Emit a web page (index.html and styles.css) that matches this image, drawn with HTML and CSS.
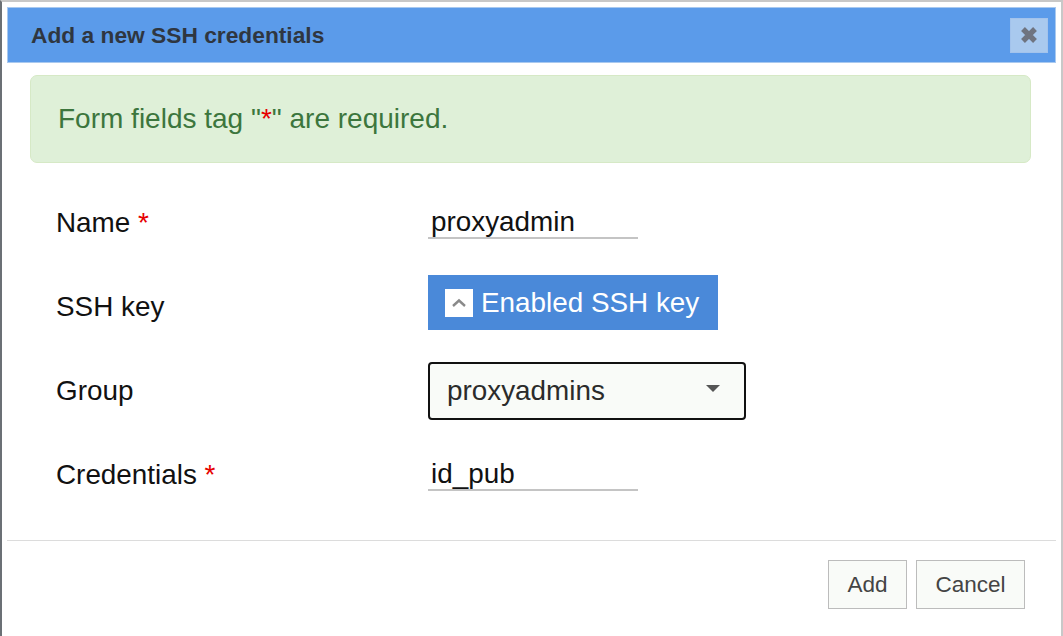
FILE: index.html
```html
<!DOCTYPE html>
<html lang="en">
<head>
<meta charset="utf-8">
<title>Add a new SSH credentials</title>
<link rel="stylesheet" href="styles.css">
</head>
<body>
<div class="dialog">
  <header class="titlebar">
    <h1 class="title">Add a new SSH credentials</h1>
    <button class="close" type="button" aria-label="Close">
      <svg class="close-icon" viewBox="0 0 20 20" width="20" height="20"><path d="M4 4L16 16M16 4L4 16" stroke="#6f7480" stroke-width="5.4" fill="none"/></svg>
    </button>
  </header>
  <div class="body">
    <div class="alert">Form fields tag "<span class="req">*</span>" are required.</div>
    <form class="form">
      <div class="row">
        <label class="label">Name <span class="req-label">*</span></label>
        <div class="field"><span class="line-input">proxyadmin</span></div>
      </div>
      <div class="row">
        <label class="label">SSH key</label>
        <div class="field field-raised">
          <span class="toggle">
            <span class="toggle-box"><svg viewBox="0 0 14 14" width="14" height="14"><path d="M1 10L7 4.5L13 10" stroke="#8a8a8a" stroke-width="2.4" fill="none"/></svg></span>
            Enabled SSH key
          </span>
        </div>
      </div>
      <div class="row">
        <label class="label">Group</label>
        <div class="field">
          <span class="select">proxyadmins<span class="caret"></span></span>
        </div>
      </div>
      <div class="row">
        <label class="label">Credentials <span class="req-label">*</span></label>
        <div class="field"><span class="line-input">id_pub</span></div>
      </div>
    </form>
  </div>
  <footer class="footer">
    <button class="btn" type="button">Add</button>
    <button class="btn" type="button">Cancel</button>
  </footer>
</div>
</body>
</html>
```
FILE: styles.css
```css
html, body {
  margin: 0;
  padding: 0;
  height: 100%;
  background: #fff;
  overflow: hidden;
}
body {
  font-family: "Liberation Sans", Arial, sans-serif;
  color: #111;
  box-sizing: border-box;
  height: 636px;
  border-top: 2px solid #c8c8c8;
  border-left: 2px solid #6b7075;
  border-right: 2px solid #c8c8c8;
}
.dialog {
  padding: 5px 5px 0 5px;
}
.titlebar {
  display: flex;
  align-items: center;
  justify-content: space-between;
  box-sizing: border-box;
  height: 56px;
  padding: 0 7px 0 23px;
  background: #5b9bea;
  border: 1px solid #a9c9ef;
}
.title {
  margin: 0;
  font-size: 22.75px;
  font-weight: 700;
  color: #2f3640;
}
.close {
  display: flex;
  align-items: center;
  justify-content: center;
  width: 38px;
  height: 35px;
  padding: 0;
  border: 1px solid #a3c3ec;
  background: #a9c9ee;
}
.body {
  padding: 12px 25px 0 23px;
}
.alert {
  box-sizing: border-box;
  height: 88px;
  line-height: 85px;
  padding-left: 27px;
  font-size: 28px;
  color: #3c763d;
  background: #dff0d8;
  border: 1px solid #d6e9c6;
  border-radius: 7px;
}
.req {
  color: #e60000;
}
.form {
  display: flex;
  flex-direction: column;
  padding: 18px 0 0 26px;
}
.row {
  display: flex;
  align-items: center;
  height: 84px;
  font-size: 27.85px;
}
.label {
  width: 372px;
  flex: none;
}
.req-label {
  color: #e60000;
}
.field-raised {
  margin-bottom: 9px;
}
.line-input {
  display: block;
  box-sizing: border-box;
  width: 210px;
  height: 32px;
  padding-left: 3px;
  line-height: 30px;
  border-bottom: 2px solid #c4c4c4;
}
.toggle {
  display: inline-flex;
  align-items: center;
  gap: 8px;
  box-sizing: border-box;
  width: 290px;
  height: 55px;
  padding-left: 17px;
  color: #fff;
  background: #4a89d9;
}
.toggle-box {
  display: flex;
  align-items: center;
  justify-content: center;
  width: 28px;
  height: 28px;
  background: #fff;
}
.select {
  display: flex;
  align-items: center;
  justify-content: space-between;
  box-sizing: border-box;
  width: 318px;
  height: 58px;
  padding: 0 24px 0 17px;
  color: #2b2b2b;
  background: #f9fbf8;
  border: 2px solid #111;
  border-radius: 4px;
}
.caret {
  width: 0;
  height: 0;
  border-left: 7px solid transparent;
  border-right: 7px solid transparent;
  border-top: 7px solid #555;
  margin-top: -6px;
}
.footer {
  display: flex;
  justify-content: flex-end;
  gap: 9px;
  margin-top: 23px;
  padding: 19px 31px 0 0;
  border-top: 1px solid #dcdcdc;
}
.btn {
  box-sizing: border-box;
  height: 49px;
  padding: 0 18.5px;
  font-family: inherit;
  font-size: 22.5px;
  color: #444;
  background: #f9fbf8;
  border: 1px solid #bcbcbc;
}
```
